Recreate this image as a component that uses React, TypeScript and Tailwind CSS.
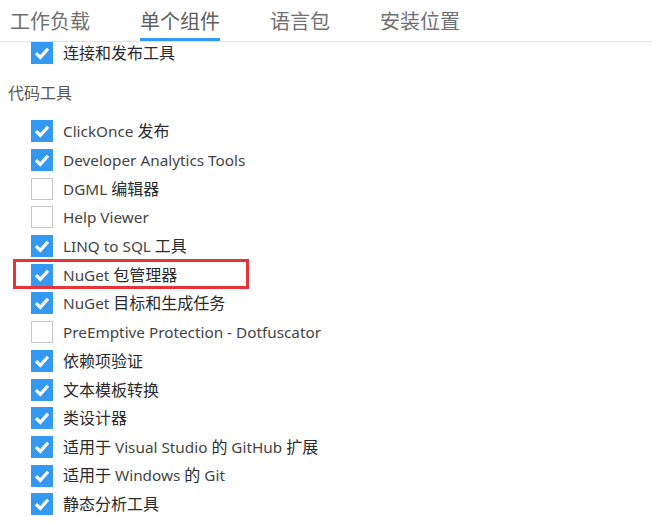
const tabs = ["工作负载", "单个组件", "语言包", "安装位置"];

const tools = [
	{ name: "ClickOnce 发布", checked: true },
	{ name: "Developer Analytics Tools", checked: true },
	{ name: "DGML 编辑器", checked: false },
	{ name: "Help Viewer", checked: false },
	{ name: "LINQ to SQL 工具", checked: true },
	{ name: "NuGet 包管理器", checked: true, marked: true },
	{ name: "NuGet 目标和生成任务", checked: true },
	{ name: "PreEmptive Protection - Dotfuscator", checked: false },
	{ name: "依赖项验证", checked: true },
	{ name: "文本模板转换", checked: true },
	{ name: "类设计器", checked: true },
	{ name: "适用于 Visual Studio 的 GitHub 扩展", checked: true },
	{ name: "适用于 Windows 的 Git", checked: true },
	{ name: "静态分析工具", checked: true },
];

function CheckBox({ checked }: { checked: boolean }) {
	if (!checked) {
		return <div className="w-[22px] h-[22px] shrink-0 border border-[#c6c6c6] bg-white" />;
	}
	return (
		<div className="w-[22px] h-[22px] shrink-0 bg-[#3399f3] flex items-center justify-center">
			<svg width="22" height="22" viewBox="0 0 22 22">
				<path
					d="M5 11.2 L9.3 15.4 L17 6.8"
					fill="none"
					stroke="white"
					strokeWidth="3.2"
					strokeLinejoin="miter"
				/>
			</svg>
		</div>
	);
}

// latin runs are drawn a bit smaller than the CJK ones
function Label({ text }: { text: string }) {
	const parts = text.split(/([\u4e00-\u9fff]+)/).filter((p) => p !== "");
	return (
		<span className="leading-none whitespace-pre">
			{parts.map((p, i) =>
				/[\u4e00-\u9fff]/.test(p) ? (
					<span key={i} className="text-[16px] text-[#2b2b2b]">
						{p}
					</span>
				) : (
					<span key={i} className="text-[15.3px] text-[#444]">
						{p}
					</span>
				)
			)}
		</span>
	);
}

function Row({ name, checked, marked }: { name: string; checked: boolean; marked?: boolean }) {
	return (
		<div className="relative h-[28.7px] flex items-center pl-[31px] gap-[10px]">
			<CheckBox checked={checked} />
			<Label text={name} />
			{marked && (
				<div className="absolute left-[13px] top-[-1px] w-[236px] h-[30px] border-[3px] border-[#e8333a]" />
			)}
		</div>
	);
}

export default function App() {
	return (
		<div
			className="w-[652px] h-[526px] overflow-hidden bg-white"
			style={{ fontFamily: '"Noto Sans", "Noto Sans CJK SC", sans-serif' }}
		>
			<div className="flex gap-[50px] pl-[10px] border-b border-[#e3e3e3]">
				{tabs.map((t, i) => (
					<div
						key={t}
						className={
							i === 1
								? "pt-[6px] leading-[32px] text-[20px] text-[#5e5e5e] border-b-[3px] border-[#3399f3]"
								: "pt-[6px] leading-[32px] text-[20px] text-[#707070] border-b-[3px] border-transparent"
						}
					>
						{t}
					</div>
				))}
			</div>
			<div className="h-[22px] flex items-center pl-[31px] gap-[10px]">
				<CheckBox checked />
				<Label text="连接和发布工具" />
			</div>
			<div className="mt-[17px] pl-[8px] text-[16px] leading-[24px] text-[#555]">代码工具</div>
			<div className="mt-[12px]">
				{tools.map((t) => (
					<Row key={t.name} {...t} />
				))}
			</div>
		</div>
	);
}
